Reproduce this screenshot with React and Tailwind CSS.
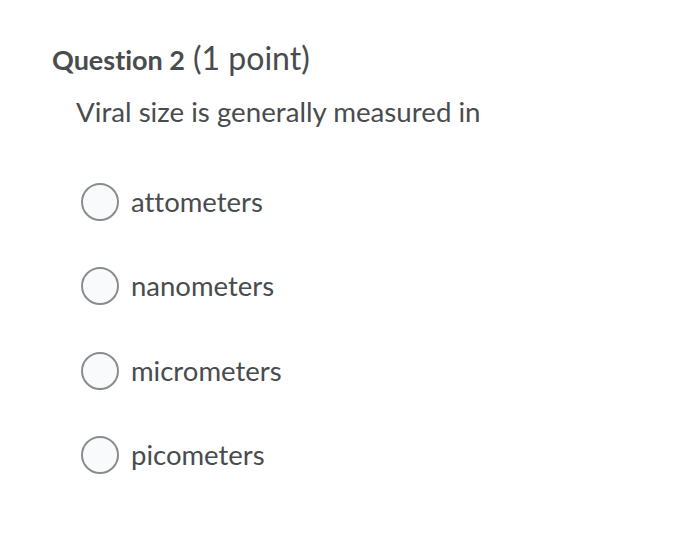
export default function App() {
  const options = ['attometers', 'nanometers', 'micrometers', 'picometers'];
  return (
    <div
      className="min-h-screen w-[700px] bg-white text-[#494c4e] [font-variant-ligatures:none]"
      style={{ fontFamily: 'Lato, "Noto Sans", sans-serif' }}
    >
      <div className="pl-[52px] pt-[42px]">
        <h2 className="flex items-baseline gap-[8px] leading-none">
          <span className="text-[27px] font-bold">Question 2</span>
          <span className="text-[32px] font-normal">(1 point)</span>
        </h2>
        <p className="mt-[24px] pl-[24px] text-[27.7px] leading-none">Viral size is generally measured in</p>
        <div className="mt-[57px] flex flex-col gap-[46.5px] pl-[29px]">
          {options.map((opt) => (
            <label key={opt} className="flex items-center gap-[12px]">
              <span className="h-[38px] w-[38px] rounded-full border-2 border-[#8a8c8f] bg-[#f9fafb]" />
              <span className="text-[27.5px] leading-none">{opt}</span>
            </label>
          ))}
        </div>
      </div>
    </div>
  );
}
